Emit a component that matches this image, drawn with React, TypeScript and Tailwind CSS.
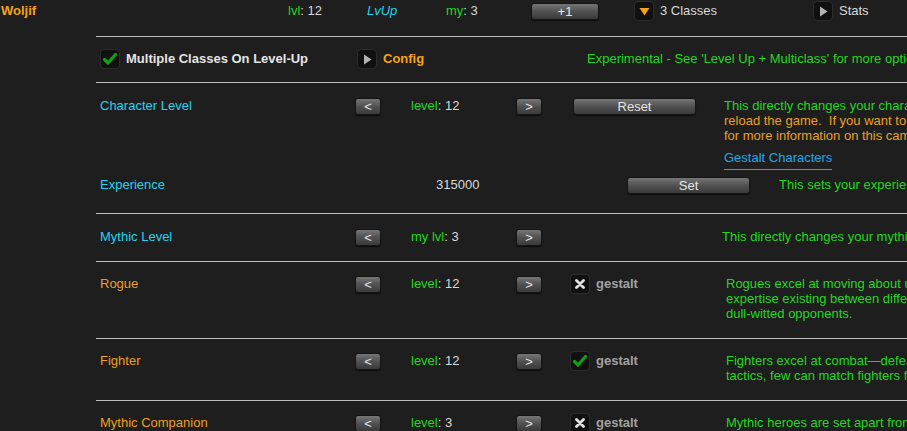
import type { ReactNode } from "react";

const font = { fontFamily: '"Liberation Sans", Arial, sans-serif' };

function Btn({ label, w }: { label: string; w: string }) {
  return (
    <div
      className={`${w} flex h-[17px] items-center justify-center rounded-[3px] border border-[#151515] bg-gradient-to-b from-[#767676] via-[#515151] to-[#3a3a3a] text-[13px] leading-none text-[#e6e6e6] shadow-[0_1px_1px_rgba(0,0,0,0.6)]`}
    >
      {label}
    </div>
  );
}

function Box({ children }: { children: ReactNode }) {
  return (
    <div className="flex h-5 w-5 shrink-0 items-center justify-center rounded-[4px] border border-[#2c2c2c] bg-[#101010]">
      {children}
    </div>
  );
}

function Check() {
  return (
    <Box>
      <svg width="14" height="12" viewBox="0 0 14 12">
        <path d="M1.5 6.5 L5 10 L12.5 1.5" fill="none" stroke="#12a012" strokeWidth="3.2" strokeLinecap="round" strokeLinejoin="round" />
      </svg>
    </Box>
  );
}

function Cross() {
  return (
    <Box>
      <svg width="10" height="10" viewBox="0 0 10 10">
        <path d="M1.5 1.5 L8.5 8.5 M8.5 1.5 L1.5 8.5" stroke="#e2e2e2" strokeWidth="2.8" strokeLinecap="round" />
      </svg>
    </Box>
  );
}

function Play() {
  return (
    <Box>
      <svg width="9" height="11" viewBox="0 0 9 11">
        <path d="M1 0.5 L8.5 5.5 L1 10.5 Z" fill="#b4b4b4" />
      </svg>
    </Box>
  );
}

function Down() {
  return (
    <Box>
      <svg width="11" height="9" viewBox="0 0 11 9">
        <path d="M0.5 1 L10.5 1 L5.5 8.5 Z" fill="#f5a01a" />
      </svg>
    </Box>
  );
}

function Desc({ lines }: { lines: ReactNode[] }) {
  return (
    <div className="min-w-0 flex-1 pt-[2px] leading-[15px]">
      {lines.map((l, i) => (
        <div key={i} className="whitespace-nowrap">
          {l}
        </div>
      ))}
    </div>
  );
}

function ClassRow({
  name,
  level,
  gestalt,
  lines,
}: {
  name: string;
  level: ReactNode;
  gestalt: boolean;
  lines: ReactNode[];
}) {
  return (
    <div className="flex items-start">
      <div className="flex h-5 w-[259px] shrink-0 items-center pl-1 text-[#eba01e]">{name}</div>
      <div className="flex h-5 w-[56px] shrink-0 items-center">
        <Btn label="<" w="w-[26px]" />
      </div>
      <div className="flex h-5 w-[105px] shrink-0 items-center">{level}</div>
      <div className="flex h-5 w-[54px] shrink-0 items-center">
        <Btn label=">" w="w-[26px]" />
      </div>
      <div className="flex h-5 w-[156px] shrink-0 items-center gap-[6px]">
        {gestalt ? <Check /> : <Cross />}
        <span className="font-bold text-[#a2a2a2]">gestalt</span>
      </div>
      <Desc lines={lines} />
    </div>
  );
}

export default function App() {
  const green = "text-[#20d820]";
  return (
    <div className="h-[431px] w-[907px] overflow-hidden bg-[#1e1e1e] text-[13px] text-[#dadada]" style={font}>
      {/* header */}
      <div className="flex h-[36px] items-start pt-[1px]">
        <div className="flex h-5 w-[288px] shrink-0 items-center pl-px font-bold text-[#f5a31a]">Woljif</div>
        <div className="flex h-5 w-[79px] shrink-0 items-center">
          <span className={green}>lvl</span>: 12
        </div>
        <div className="flex h-5 w-[79px] shrink-0 items-center italic text-[#22d3ee]">LvUp</div>
        <div className="flex h-5 w-[85px] shrink-0 items-center">
          <span className={green}>my</span>: 3
        </div>
        <div className="flex h-5 w-[103px] shrink-0 items-center">
          <Btn label="+1" w="w-[68px]" />
        </div>
        <div className="flex h-5 w-[179px] shrink-0 items-center gap-[6px]">
          <Down />
          <span>3 Classes</span>
        </div>
        <div className="flex h-5 items-center gap-[6px]">
          <Play />
          <span>Stats</span>
        </div>
      </div>

      <div className="ml-[96px]">
        {/* multiple classes */}
        <div className="h-[46px] border-t border-[#bdbdbd] pt-[12px]">
          <div className="flex items-center">
            <div className="flex h-5 w-[261px] shrink-0 items-center gap-[6px] pl-1">
              <Check />
              <span className="font-bold text-[#e4e4e4]">Multiple Classes On Level-Up</span>
            </div>
            <div className="flex h-5 w-[230px] shrink-0 items-center gap-[6px]">
              <Play />
              <span className="font-bold text-[#f5a31a]">Config</span>
            </div>
            <div className={`whitespace-nowrap ${green}`}>
              Experimental - See 'Level Up + Multiclass' for more options
            </div>
          </div>
        </div>

        {/* character level + experience */}
        <div className="h-[131px] border-t border-[#bdbdbd] pt-[13px]">
          <div className="flex items-start">
            <div className="flex h-5 w-[259px] shrink-0 items-center pl-1 text-[#22d3ee]">Character Level</div>
            <div className="flex h-5 w-[56px] shrink-0 items-center">
              <Btn label="<" w="w-[26px]" />
            </div>
            <div className="flex h-5 w-[105px] shrink-0 items-center">
              <span className={green}>level</span>: 12
            </div>
            <div className="flex h-5 w-[57px] shrink-0 items-center">
              <Btn label=">" w="w-[26px]" />
            </div>
            <div className="flex h-5 w-[151px] shrink-0 items-center">
              <Btn label="Reset" w="w-[123px]" />
            </div>
            <div className="min-w-0 flex-1">
              <Desc
                lines={[
                  <span className={green}>This directly changes your character level but will not change exp or adjust any features. You need to</span>,
                  <span className="text-[#eba01e]">reload the game.&nbsp; If you want to change your class levels use the buttons below.&nbsp; See</span>,
                  <span className="text-[#eba01e]">for more information on this campaign option.</span>,
                ]}
              />
              <div className="mt-[7px] inline-block border-b border-[#1ea8ea] pb-[4px] leading-[15px] text-[#1ea8ea]">
                Gestalt Characters
              </div>
            </div>
          </div>
          <div className="mt-[5px] flex items-start">
            <div className="flex h-5 w-[340px] shrink-0 items-center pl-1 text-[#22d3ee]">Experience</div>
            <div className="flex h-5 w-[191px] shrink-0 items-center">315000</div>
            <div className="flex h-5 w-[152px] shrink-0 items-center">
              <Btn label="Set" w="w-[123px]" />
            </div>
            <div className={`flex h-5 items-center whitespace-nowrap ${green}`}>
              This sets your experience to match the current value of character level.
            </div>
          </div>
        </div>

        {/* mythic level */}
        <div className="h-[48px] border-t border-[#bdbdbd] pt-[13px]">
          <div className="flex items-start">
            <div className="flex h-5 w-[259px] shrink-0 items-center pl-1 text-[#22d3ee]">Mythic Level</div>
            <div className="flex h-5 w-[56px] shrink-0 items-center">
              <Btn label="<" w="w-[26px]" />
            </div>
            <div className="flex h-5 w-[105px] shrink-0 items-center">
              <span className={green}>my lvl</span>: 3
            </div>
            <div className="flex h-5 w-[206px] shrink-0 items-center">
              <Btn label=">" w="w-[26px]" />
            </div>
            <div className={`flex h-5 items-center whitespace-nowrap ${green}`}>
              This directly changes your mythic level but will not adjust any features.
            </div>
          </div>
        </div>

        {/* rogue */}
        <div className="h-[77px] border-t border-[#bdbdbd] pt-[12px]">
          <ClassRow
            name="Rogue"
            level={
              <>
                <span className={green}>level</span>: 12
              </>
            }
            gestalt={false}
            lines={[
              <span className={green}>Rogues excel at moving about unseen and catching foes unaware, and tend to avoid head-to-head combat.</span>,
              <span className={green}>expertise existing between different characters. Most, however, excel in overcoming hindrances of all</span>,
              <span className={green}>dull-witted opponents.</span>,
            ]}
          />
        </div>

        {/* fighter */}
        <div className="h-[62px] border-t border-[#bdbdbd] pt-[12px]">
          <ClassRow
            name="Fighter"
            level={
              <>
                <span className={green}>level</span>: 12
              </>
            }
            gestalt={true}
            lines={[
              <span className={green}>Fighters excel at combat—defeating their enemies, controlling the flow of battle, and surviving such</span>,
              <span className={green}>tactics, few can match fighters for sheer battle prowess.</span>,
            ]}
          />
        </div>

        {/* mythic companion */}
        <div className="border-t border-[#bdbdbd] pt-[12px]">
          <ClassRow
            name="Mythic Companion"
            level={
              <>
                <span className={green}>level</span>: 3
              </>
            }
            gestalt={false}
            lines={[
              <span className={green}>Mythic heroes are set apart from the common folk by the power that flows through them.</span>,
            ]}
          />
        </div>
      </div>
    </div>
  );
}
